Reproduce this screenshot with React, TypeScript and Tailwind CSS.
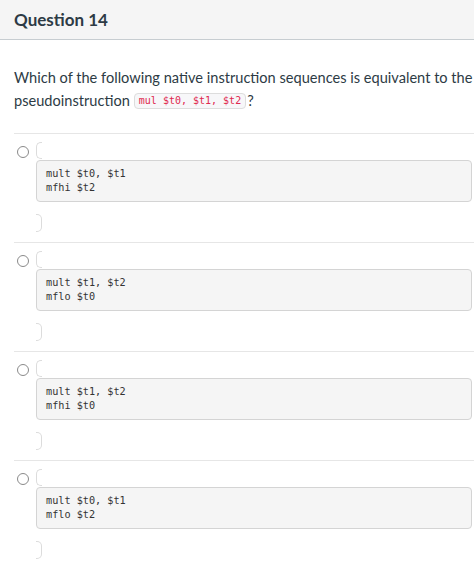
import React from "react";

const options = [
  ["mult $t0, $t1", "mfhi $t2"],
  ["mult $t1, $t2", "mflo $t0"],
  ["mult $t1, $t2", "mfhi $t0"],
  ["mult $t0, $t1", "mflo $t2"],
];

export default function App() {
  return (
    <div className="w-[474px] h-[585px] overflow-hidden bg-white text-[#2d3b45]" style={{ fontFamily: "Lato, 'Noto Sans', sans-serif" }}>
      <div className="h-[40px] bg-[#f5f5f5] border-b border-[#c7cdd1] flex items-center pl-[14px]">
        <h2 className="text-[17px] font-bold leading-none">Question 14</h2>
      </div>
      <div className="pl-[14px] pt-[26px]">
        <div className="text-[14.6px] leading-[23px] whitespace-nowrap">
          <div>Which of the following native instruction sequences is equivalent to the</div>
          <div className="flex items-center">
            <span>pseudoinstruction</span>
            <code
              className="ml-[4px] inline-block h-[16px] px-[4px] leading-[14px] text-[10px] text-[#e0284f] bg-[#f7f7f9] border border-[#dddddd] rounded-[4px]"
              style={{ fontFamily: "'DejaVu Sans Mono', monospace" }}
            >
              mul $t0, $t1, $t2
            </code>
            <span className="ml-[1px]">?</span>
          </div>
        </div>
        <div className="mt-[21px]">
          {options.map((lines, i) => (
            <div key={i} className="border-t border-[#e6e6e6] flex">
              <div className="w-[22px] shrink-0 pt-[12px] pl-[3px]">
                <div className="w-[12px] h-[12px] rounded-full border border-[#8a8a8a] bg-white" />
              </div>
              <div className="flex-1 pr-[2px] pt-[8px] pb-[10px]">
                <div className="w-[6px] h-[17px] border-l border-t border-b border-[#dcdcdc] rounded-l-[5px]" />
                <pre
                  className="mt-[1px] bg-[#f5f5f5] border border-[#d4d4d4] rounded-[4px] pl-[9px] pt-[6px] pb-[6px] text-[10.2px] leading-[14px] text-[#333333]"
                  style={{ fontFamily: "'DejaVu Sans Mono', monospace" }}
                >
                  {lines[0] + "\n" + lines[1]}
                </pre>
                <div className="mt-[12px] w-[6px] h-[18px] border-r border-t border-b border-[#dcdcdc] rounded-r-[5px]" />
              </div>
            </div>
          ))}
        </div>
      </div>
    </div>
  );
}
